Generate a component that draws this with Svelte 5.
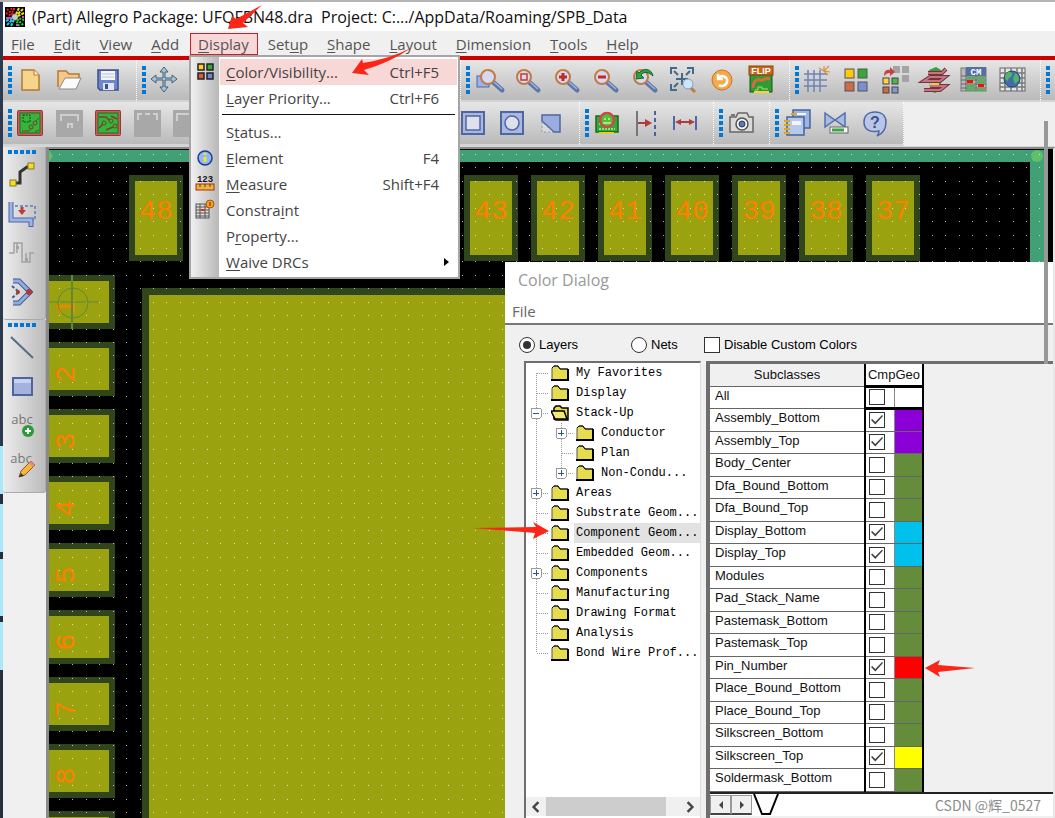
<script>
  const lens = `
    <path d="M17 17 L26 25" stroke="#5f76a8" stroke-width="5" stroke-linecap="round"/>
    <path d="M18 17 L26 24" stroke="#9fb2dc" stroke-width="1.5"/>
    <circle cx="12" cy="12" r="7" fill="#d5daf2" stroke="#c07a45" stroke-width="2"/>
    <path d="M7 10a6 6 0 0 1 5-4" stroke="#f6c894" stroke-width="1" fill="none"/>`;

  const board = `
    <rect x="2" y="2" width="26" height="26" rx="2" fill="#8e3a3a"/>
    <rect x="3" y="3" width="24" height="24" rx="1" fill="#d05a5a"/>
    <rect x="5" y="5" width="20" height="20" fill="#35b53a" stroke="#1c6e22"/>`;

  const icons = {
    create: `<path d="M7 5h12l5 5v15H7z" fill="#f5d48c" stroke="#b27a2e" stroke-width="1.5"/><path d="M19 5v5h5" fill="#fff3cf" stroke="#b27a2e"/>`,
    open: `<path d="M4 22V6h8l3 3h10v5" fill="#f3c889" stroke="#b9782f" stroke-width="1.5"/><path d="M5 24l6-11h16l-5 11z" fill="#fbfbfb" stroke="#8a8a8a"/>`,
    save: `<path d="M5 5h20v20H7l-2-2z" fill="#6f86c8" stroke="#3c508c" stroke-width="1.5"/><rect x="8" y="6" width="14" height="9" fill="#f4f6fc"/><path d="M9 9h12M9 12h12" stroke="#b9c2de"/><rect x="10" y="18" width="11" height="7" fill="#dfe5f5"/><rect x="12" y="19" width="3" height="5" fill="#3c508c"/>`,
    move: `<path d="M15 2l4 5h-3v6h7v-3l5 4-5 4v-3h-7v7h3l-4 5-4-5h3v-7H7v3l-5-4 5-4v3h7V7h-3z" fill="#a9c4d6" stroke="#3f6178"/>`,
    zoomWindow: `<rect x="4" y="11" width="12" height="11" fill="#9db2ea" stroke="#5068a8"/><g transform="translate(3 0)">${lens}</g>`,
    zoomBox: `${lens}<rect x="9" y="9" width="6" height="6" fill="none" stroke="#c23a3a" stroke-width="1.5"/>`,
    zoomIn: `${lens}<path d="M12 8v8M8 12h8" stroke="#c02a2a" stroke-width="3"/>`,
    zoomOut: `${lens}<path d="M8 12h8" stroke="#c02a2a" stroke-width="3"/>`,
    zoomBack: `${lens}<path d="M24 11c-1-7-9-9-14-3L8 6l-1 8 8-1-3-3c3-4 8-3 12 1z" fill="#2f9e46" stroke="#17682a"/>`,
    zoomFit: `<path d="M3 9V3h6M19 3h6v6M3 19v6h6" stroke="#446a88" stroke-width="2" fill="none"/><path d="M6 6l4 4M22 6l-4 4M6 22l4-4" stroke="#446a88" stroke-width="2"/><path d="M14 8v12M8 14h12" stroke="#446a88" stroke-width="2"/><path d="M22 22l5 5" stroke="#b8813e" stroke-width="3"/><circle cx="20" cy="19" r="5" fill="#cfe4f8" stroke="#7ba2cc"/>`,
    undo: `<circle cx="15" cy="15" r="10" fill="#f6a94a" stroke="#cb7424"/><path d="M11 9v5h5M12 13c3-4 9-1 8 4-1 4-6 5-8 3" stroke="#fff" stroke-width="2.5" fill="none"/>`,
    flip: `<rect x="4" y="9" width="22" height="18" fill="#2f9b34" stroke="#17521c"/><path d="M7 23c0-6 3-9 7-8s5-3 10-1" stroke="#d96a3c" stroke-width="3" fill="none"/><path d="M9 25h3v-3h4v2h6" stroke="#a6e07a" fill="none"/><path d="M8 27h15" stroke="#f5d52c" stroke-width="2"/><rect x="3" y="1" width="24" height="9" fill="#c9661a" stroke="#8e430d"/><text x="15" y="9" font-family="Liberation Sans" font-size="9" font-weight="700" fill="#fff" text-anchor="middle">FLIP</text>`,
    grid: `<path d="M2 9h23M2 15h23M2 21h23M6 5v22M12 5v22M18 5v22" stroke="#6d83b5" stroke-width="1.5"/><path d="M22 6l5-5M22 6l6 1M22 6V1M22 6l4 4M22 6l-5-3" stroke="#d9923b" stroke-width="1.2"/>`,
    colors: `<g stroke="#555"><rect x="4" y="4" width="9" height="9" fill="#ffc90e"/><rect x="17" y="4" width="9" height="9" fill="#35a835"/><rect x="4" y="17" width="9" height="9" fill="#cf6b4a"/><rect x="17" y="17" width="9" height="9" fill="#7b8fd4"/></g>`,
    recolor: `<path d="M13 1h7v7h-7zM22 1h7v7h-7zM22 10h7v7h-7z" fill="#a4a4a4"/><g stroke="#444"><rect x="3" y="13" width="6" height="6" fill="#ffd83a"/><rect x="12" y="13" width="6" height="6" fill="#4bb84b"/><rect x="3" y="22" width="6" height="6" fill="#cf6b4a"/><rect x="12" y="22" width="6" height="6" fill="#8494d8"/></g><path d="M4 11c0-5 2-7 6-6V2l5 5-5 4V8c-3 0-4 1-6 3z" fill="#c64242"/>`,
    stack: `<path d="M10 5l7-3 5 3v20l-6 3-5-2z" fill="#36a03a"/><g fill="none" stroke="#7d2f3c" stroke-width="4"><path d="M5 25h16l5-4H11"/><path d="M5 16h16l5-4H11z"/><path d="M9 8h14l4-4"/></g><g fill="none" stroke="#c07880" stroke-width="2"><path d="M5 25h16l5-4H11"/><path d="M5 16h16l5-4H11z"/><path d="M9 8h14l4-4"/></g><path d="M11 19h9" stroke="#eacb50" stroke-width="2"/>`,
    manager: `<rect x="3" y="3" width="25" height="23" fill="#b9b9b9" stroke="#777"/><path d="M3 11h25M3 15h25M3 19h25M3 23h25M8 3v23M18 8v18" stroke="#666"/><path d="M9 12h8v2H9zM19 12h8v2h-8zM9 20h8v2H9zM19 16h8v2h-8zM9 24h8v2H9zM19 24h8v2h-8z" fill="#3fbf45"/><path d="M9 15h6v3H9zM20 19h6v3h-6z" fill="#f01010"/><rect x="8" y="2" width="20" height="9" fill="#54709f"/><text x="18" y="10" font-family="Liberation Mono" font-size="9" font-weight="700" fill="#fff" text-anchor="middle">CM</text>`,
    world: `<rect x="3" y="3" width="25" height="23" fill="#e5e5e5" stroke="#666"/><path d="M3 8h25M3 13h25M3 18h25M3 22h25M8 3v23M14 3v23M20 3v23M25 3v23" stroke="#777" stroke-width="1.5"/><circle cx="15" cy="14" r="8" fill="#3f6fa8" stroke="#274a72"/><path d="M9 9c3-4 7-2 6 1s-4 2-4 6c-3-1-4-4-2-7zM18 8c3 1 4 4 4 7l-4 4-2-5z" fill="#55b368"/>`,
    place: `${board}<path d="M8 7h7v7H8z" fill="none" stroke="#124716" stroke-dasharray="2 1"/><path d="M7 23h7l2-2M21 13l3-3M20 24l4-2" stroke="#77402e" fill="none"/><circle cx="16" cy="19" r="2" fill="none" stroke="#77402e"/><circle cx="20" cy="15" r="2" fill="none" stroke="#77402e"/>`,
    route: `${board}<path d="M6 9h7l3 3M6 20l4-4M13 22l7-3M18 8l6 3" stroke="#77402e" fill="none" stroke-width="1.5"/><circle cx="11" cy="15" r="2" fill="none" stroke="#77402e"/><circle cx="18" cy="13" r="2" fill="none" stroke="#77402e"/><circle cx="22" cy="18" r="2" fill="none" stroke="#77402e"/>`,
    ghostLock: `<rect x="2" y="2" width="27" height="27" fill="#a8a8a8"/><path d="M7 13V7h17v6M14 20v-4h4v4" stroke="#cfcfcf" stroke-width="2" fill="none"/>`,
    ghostFrame: `<rect x="2" y="2" width="27" height="27" fill="#a8a8a8"/><path d="M6 12V6h4M13 6h5M21 6h4v6" stroke="#cfcfcf" stroke-width="2" fill="none"/>`,
    ghostPage: `<rect x="2" y="2" width="27" height="27" fill="#a8a8a8"/><path d="M6 13V6h18" stroke="#cfcfcf" stroke-width="2" fill="none"/>`,
    shapeRect: `<rect x="4" y="4" width="22" height="22" fill="#a9b8e2" stroke="#4f66a0" stroke-width="2"/><rect x="8" y="8" width="14" height="14" fill="#dfe1ea" stroke="#4f66a0" stroke-width="1.5"/>`,
    shapeCircle: `<rect x="4" y="4" width="22" height="22" fill="#a9b8e2" stroke="#4f66a0" stroke-width="2"/><circle cx="15" cy="15" r="7" fill="#dfe1ea" stroke="#4f66a0" stroke-width="1.5"/>`,
    shapeCut: `<path d="M6 7h18v17H18L6 13z" fill="#9aadde" stroke="#4f66a0" stroke-width="1.5"/><path d="M6 14v10h11z" fill="#d9d9d9" stroke="#8595b8" stroke-dasharray="2 2"/>`,
    drc: `<rect x="4" y="8" width="22" height="16" fill="#35a83a" stroke="#176a1c" stroke-width="1.5"/><path d="M7 21h16M7 12h3M20 12h3M7 16h3M20 16h3" stroke="#8ee27a" stroke-width="2" stroke-dasharray="2 1"/><path d="M7 25h15" stroke="#e8c92e" stroke-width="2"/><circle cx="15" cy="12" r="7" fill="#4fbf3f" stroke="#d04848" stroke-width="2.5"/><path d="M12 11h2M16 11h2M11 15h8" stroke="#d6f08a" stroke-width="1.5"/>`,
    spaceRight: `<path d="M6 3v25" stroke="#777" stroke-width="2"/><path d="M24 3v25" stroke="#4c62a0" stroke-width="2" stroke-dasharray="4 3"/><path d="M7 15h8" stroke="#b23a3a" stroke-width="2"/><path d="M14 11l7 4-7 4z" fill="#b23a3a"/>`,
    dimension: `<path d="M4 8v14M26 8v14" stroke="#5168a8" stroke-width="2"/><path d="M9 14h13" stroke="#b23a3a" stroke-width="2"/><path d="M5 14l6-3v6zM25 14l-6-3v6z" fill="#b23a3a"/>`,
    camera: `<path d="M4 9h6l2-4h9l2 4h4v15H4z" fill="#d9d9d9" stroke="#666" stroke-width="1.5"/><rect x="5" y="6" width="4" height="2" fill="#777"/><circle cx="16" cy="16" r="6" fill="#f2f2f2" stroke="#555" stroke-width="1.5"/><circle cx="16" cy="16" r="3" fill="#5f77b0" stroke="#2d3a60"/>`,
    reports: `<rect x="11" y="2" width="17" height="18" fill="#9db5e2" stroke="#4a629c" stroke-width="1.5"/><path d="M14 6h10" stroke="#f4f6fc" stroke-width="2"/><rect x="5" y="9" width="17" height="18" fill="#b5c8ee" stroke="#4a629c" stroke-width="1.5"/><path d="M10 13h9v4h-9z" fill="#f4f6fc"/><path d="M2 13h6M2 17h6M2 21h6M2 25h6M9 6h6" stroke="#d8a820" stroke-width="2"/>`,
    waive: `<path d="M4 5l10 7 10-7v14l-10-7-10 7z" fill="#a9bbe0" stroke="#5470a8" stroke-width="1.5"/><rect x="9" y="19" width="18" height="6" fill="#f2f2f2" stroke="#666"/><path d="M11 22h12" stroke="#3aa83e" stroke-width="3"/>`,
    help: `<path d="M15 4c7 0 11 4 11 10 0 8-4 12-9 14 2-2 2-3 2-5C9 25 4 21 4 14 4 8 8 4 15 4z" fill="#b9c6ea" stroke="#5268a4" stroke-width="1.5"/><text x="15" y="20" font-family="Liberation Sans" font-size="16" font-weight="700" fill="#3e5388" text-anchor="middle">?</text>`,
    connect: `<path d="M8 23h5V12l7-5h3" stroke="#333" stroke-width="3" fill="none"/><g fill="#f2dc2e" stroke="#8a7a1c"><rect x="3" y="20" width="6" height="6"/><rect x="21" y="3" width="6" height="6"/></g>`,
    slide: `<path d="M8 7h20v14H8" fill="none" stroke="#5a7cc0" stroke-width="1.5" stroke-dasharray="3 2"/><path d="M4 3v18h20v7" stroke="#4a66a4" stroke-width="5" fill="none"/><path d="M4 3v18h20v6" stroke="#9db5e6" stroke-width="3" fill="none"/><path d="M15 8v5" stroke="#c03a3a" stroke-width="3"/><path d="M11 11h8l-4 5z" fill="#c03a3a"/>`,
    delay: `<path d="M2 15h5V5h8v19h8V15h4M10 5v10M19 15v9" stroke="#a2a2a2" stroke-width="1.5" fill="none"/><path d="M9 8h3v3H9zM18 20h3v3h-3z" fill="#a2a2a2"/>`,
    corner: `<path d="M6 4h6l11 11-11 11H6" stroke="#3f5a98" stroke-width="5" fill="none"/><path d="M6 4h6l11 11-11 11H6" stroke="#92ace0" stroke-width="3" fill="none"/><path d="M5 9l7 6-7 6" stroke="#3f5a98" stroke-width="2" fill="none" stroke-dasharray="3 2"/><circle cx="11" cy="15" r="2" fill="#a83a3a"/><circle cx="22" cy="15" r="3" fill="#a83a3a"/>`,
    line: `<path d="M4 4l22 21" stroke="#5a6a8a" stroke-width="2"/>`,
    rect: `<rect x="6" y="6" width="19" height="17" fill="#a3b3dd" stroke="#4d649c" stroke-width="2"/><path d="M7 9h17" stroke="#c8d2ee" stroke-width="4"/>`,
    addText: `<text x="15" y="13" font-family="Open Sans" font-size="13" fill="#777" text-anchor="middle">abc</text><circle cx="21" cy="20" r="6" fill="#2b9b38"/><path d="M21 17v6M18 20h6" stroke="#fff" stroke-width="2"/>`,
    editText: `<text x="14" y="13" font-family="Open Sans" font-size="13" fill="#777" text-anchor="middle">abc</text><path d="M12 27l2-6L24 11l4 4-10 10z" fill="#f5b63a" stroke="#8a5a2a"/><path d="M24 11l4 4-2 2-4-4z" fill="#e08a7a"/><path d="M12 27l2-4 3 3z" fill="#333"/>`,
    palette: `<g stroke="#222" stroke-width="1.5"><rect x="8" y="7" width="6" height="6" fill="#ffd020"/><rect x="17" y="7" width="6" height="6" fill="#35a835"/><rect x="8" y="16" width="6" height="6" fill="#d85a40"/><rect x="17" y="16" width="6" height="6" fill="#6f86d8"/></g>`,
    info: `<circle cx="15" cy="15" r="7" fill="#8fb8ee" stroke="#1e3a9c" stroke-width="1.5"/><path d="M15 14v5M15 10v2" stroke="#f5e02a" stroke-width="3"/>`,
    measure: `<text x="15" y="13" font-family="Liberation Mono" font-size="9" font-weight="700" fill="#111" text-anchor="middle">123</text><rect x="6" y="15" width="18" height="6" fill="#e8b63a" stroke="#b02a1a"/><path d="M10 15v3M15 15v3M20 15v3" stroke="#7a2a10"/>`,
    constraint: `<rect x="6" y="9" width="13" height="14" fill="#ddd" stroke="#555"/><path d="M6 12h13M6 15h13M6 18h13M6 21h13M10 9v14M15 9v14" stroke="#555"/><path d="M11 15h4" stroke="#e03020" stroke-width="2"/><circle cx="20" cy="9" r="4" fill="#f0a020" stroke="#a85a10"/><path d="M20 7v4" stroke="#a01010"/>`
  };

  const topRow = [
    { name: 'file', tools: ['create', 'open', 'save'] },
    { name: 'edit', tools: ['move'] },
    { name: 'zoom', tools: ['zoomWindow', 'zoomBox', 'zoomIn', 'zoomOut', 'zoomBack', 'zoomFit', 'undo', 'flip'] },
    { name: 'setup', tools: ['grid', 'colors', 'recolor', 'stack', 'manager', 'world'] },
    { name: 'more', tools: [] }
  ];

  const secondRow = [
    { name: 'mode', tools: ['place', 'ghostLock', 'route', 'ghostFrame', 'ghostPage'], after: ['shapeRect', 'shapeCircle', 'shapeCut'] },
    { name: 'dimension', tools: ['drc', 'spaceRight', 'dimension'] },
    { name: 'capture', tools: ['camera'] },
    { name: 'misc', tools: ['reports', 'waive', 'help'] }
  ];

  const sideGroups = [
    ['connect', 'slide', 'delay', 'corner'],
    ['line', 'rect', 'addText', 'editText']
  ];

  // "&" stands in front of the accelerator letter
  const menus = ['&File', '&Edit', '&View', '&Add', '&Display', 'Set&up', '&Shape', '&Layout', '&Dimension', '&Tools', '&Help'];

  const displayMenu = [
    { label: '&Color/Visibility...', keys: 'Ctrl+F5', icon: 'palette', active: true },
    { label: '&Layer Priority...', keys: 'Ctrl+F6' },
    { separator: true },
    { label: 'S&tatus...' },
    { label: '&Element', keys: 'F4', icon: 'info' },
    { label: '&Measure', keys: 'Shift+F4', icon: 'measure' },
    { label: 'Constra&int', icon: 'constraint' },
    { label: 'P&roperty...' },
    { label: '&Waive DRCs', submenu: true }
  ];

  const tree = [
    { label: 'My Favorites', first: true },
    { label: 'Display' },
    { label: 'Stack-Up', box: 'minus', open: true },
    { label: 'Conductor', box: 'plus', child: true },
    { label: 'Plan', child: true },
    { label: 'Non-Condu...', box: 'plus', child: true, last: true },
    { label: 'Areas', box: 'plus' },
    { label: 'Substrate Geom...' },
    { label: 'Component Geom...', selected: true },
    { label: 'Embedded Geom...' },
    { label: 'Components', box: 'plus' },
    { label: 'Manufacturing' },
    { label: 'Drawing Format' },
    { label: 'Analysis' },
    { label: 'Bond Wire Prof...', last: true }
  ];

  let subclasses = $state([
    { name: 'All', on: false, color: '#ffffff' },
    { name: 'Assembly_Bottom', on: true, color: '#8c00d8' },
    { name: 'Assembly_Top', on: true, color: '#8c00d8' },
    { name: 'Body_Center', on: false, color: '#648c3a' },
    { name: 'Dfa_Bound_Bottom', on: false, color: '#648c3a' },
    { name: 'Dfa_Bound_Top', on: false, color: '#648c3a' },
    { name: 'Display_Bottom', on: true, color: '#00c0ec' },
    { name: 'Display_Top', on: true, color: '#00c0ec' },
    { name: 'Modules', on: false, color: '#648c3a' },
    { name: 'Pad_Stack_Name', on: false, color: '#648c3a' },
    { name: 'Pastemask_Bottom', on: false, color: '#648c3a' },
    { name: 'Pastemask_Top', on: false, color: '#648c3a' },
    { name: 'Pin_Number', on: true, color: '#ff0000' },
    { name: 'Place_Bound_Bottom', on: false, color: '#648c3a' },
    { name: 'Place_Bound_Top', on: false, color: '#648c3a' },
    { name: 'Silkscreen_Bottom', on: false, color: '#648c3a' },
    { name: 'Silkscreen_Top', on: true, color: '#ffff00' },
    { name: 'Soldermask_Bottom', on: false, color: '#648c3a' }
  ]);

  let view = $state('layers');
  let noCustom = $state(false);

  const topPads = [48, 43, 42, 41, 40, 39, 38, 37].map((n) => ({ n, x: 80 + (48 - n) * 67 }));
  const sidePads = [1, 2, 3, 4, 5, 6, 7, 8, ''].map((n, i) => ({ n, y: 126 + i * 67 }));

  const pitch = 13.43;
  let dots = '';
  for (let row = 0; row < 80; row++) {
    for (let col = 0; col < 150; col++) {
      dots += `M${Math.round(10 + col * pitch)} ${Math.round(5 + row * pitch)}h1v1h-1z`;
    }
  }

  function split(label) {
    const i = label.indexOf('&');
    return [label.slice(0, i), label[i + 1], label.slice(i + 2)];
  }
</script>

{#snippet icon(name)}
  <svg class="icon" viewBox="0 0 30 30" fill="none" aria-hidden="true">{@html icons[name]}</svg>
{/snippet}

{#snippet accel(label)}
  {@const [pre, key, post] = split(label)}
  <span>{pre}<u>{key}</u>{post}</span>
{/snippet}

{#snippet grip()}
  <span class="grip"><i></i><i></i><i></i><i></i><i></i></span>
{/snippet}

{#snippet toolRow(groups)}
  {#each groups as group}
    <div class="group {group.name}">
      {@render grip()}
      {#each group.tools as tool}
        <button class="tool" aria-label={tool}>{@render icon(tool)}</button>
      {/each}
      {#if group.after}
        <span class="spacer"></span>
        {#each group.after as tool}
          <button class="tool" aria-label={tool}>{@render icon(tool)}</button>
        {/each}
      {/if}
    </div>
  {/each}
{/snippet}

<div class="app">
  <header class="titlebar">
    <svg class="logo" viewBox="0 0 20 20" aria-hidden="true">
      <rect width="20" height="20" fill="#000" />
      <path d="M2 2l6 6M6 1l3 6M1 6l6 3M9 1v3" stroke="#f02020" stroke-width="2" stroke-dasharray="2 1" />
      <path d="M18 2l-6 6M14 1l-3 6M19 6l-6 3" stroke="#f0e020" stroke-width="2" stroke-dasharray="3 1" />
      <path d="M2 18l6-6M6 19l3-6M1 14l6-3" stroke="#20d8e8" stroke-width="2" stroke-dasharray="3 1" />
      <path d="M18 18l-6-6M14 19l-3-6M19 13l-6-2" stroke="#30d030" stroke-width="2" stroke-dasharray="2 1" />
      <path d="M1 11h5M11 18h2M17 10h2" stroke="#e040e0" stroke-width="2" />
      <circle cx="10" cy="10" r="3" fill="#c8c8c8" />
    </svg>
    <h1>(Part) Allegro Package: UFQFBN48.dra  Project: C:.../AppData/Roaming/SPB_Data</h1>
  </header>

  <nav class="menubar">
    {#each menus as menu}
      {#if menu === '&Display'}
        <div class="menu-holder">
          <button class="menu current" aria-expanded="true">{@render accel(menu)}</button>
          <div class="dropdown">
            {#each displayMenu as item}
              {#if item.separator}
                <hr />
              {:else}
                <button class="item" class:active={item.active}>
                  <span class="item-icon">{#if item.icon}{@render icon(item.icon)}{/if}</span>
                  <span class="item-text">
                    {@render accel(item.label)}
                    {#if item.keys}<span>{item.keys}</span>{/if}
                    {#if item.submenu}<span class="caret"></span>{/if}
                  </span>
                </button>
              {/if}
            {/each}
          </div>
        </div>
      {:else}
        <button class="menu">{@render accel(menu)}</button>
      {/if}
    {/each}
  </nav>

  <div class="toolbar first">{@render toolRow(topRow)}</div>
  <div class="toolbar second">{@render toolRow(secondRow)}</div>

  <main>
    <aside>
      {#each sideGroups as tools}
        <div class="side-group">
          {@render grip()}
          {#each tools as tool}
            <button class="tool" aria-label={tool}>{@render icon(tool)}</button>
          {/each}
        </div>
      {/each}
    </aside>

    <section class="canvas">
      <svg class="board" aria-label="Package drawing">
        <rect width="100%" height="12" y="1" fill="#41a076" />
        <rect x="981" y="1" width="14" height="100%" fill="#41a076" />
        <rect x="995" y="1" width="100%" height="100%" fill="#000" />
        <circle cx="988" cy="7" r="6" fill="#5fbf6a" />
        <path d="M0 1l4 6-4 6z" fill="#5fbf6a" />
        {#each topPads as pad}
          <rect class="mask" x={pad.x} y="26" width="54" height="86" />
          <rect class="pad" x={pad.x + 6} y="32" width="42" height="74" />
        {/each}
        {#each sidePads as pad}
          <rect class="mask" x="-10" y={pad.y} width="76" height="54" />
          <rect class="pad" x="-10" y={pad.y + 6} width="70" height="42" />
        {/each}
        <rect class="mask" x="93" y="139" width="800" height="900" />
        <rect class="pad" x="100" y="146" width="786" height="886" />
        <path class="dots" d={dots} />
        {#each topPads as pad}
          <text class="pin" x={pad.x + 27} y="70">{pad.n}</text>
        {/each}
        {#each sidePads as pad}
          {#if pad.n}
            <text class="pin" transform="translate(25 {pad.y + 32}) rotate(-90)">{pad.n}</text>
          {/if}
        {/each}
        <g fill="none" stroke="#5f8c32">
          <circle cx="24" cy="154" r="15" />
          <path d="M0 153h50" />
          <path d="M23 126v54" stroke-width="2" />
        </g>
      </svg>

      <div class="dialog" role="dialog" aria-labelledby="dialog-title">
        <h2 id="dialog-title">Color Dialog</h2>
        <div class="dialog-menu"><button>File</button></div>

        <div class="options">
          <label class="layers"><input type="radio" bind:group={view} value="layers" />Layers</label>
          <label class="nets"><input type="radio" bind:group={view} value="nets" />Nets</label>
          <label><input type="checkbox" bind:checked={noCustom} />Disable Custom Colors</label>
        </div>

        <div class="panes">
          <div class="tree">
            <ul>
              {#each tree as node}
                <li class:selected={node.selected}>
                  {#if node.child}
                    <svg class="guide" viewBox="0 0 25 20"><path d="M10 0v20" /></svg>
                  {/if}
                  <svg class="guide" viewBox="0 0 25 20">
                    <path d="M10 {node.first ? 10 : 0}V{node.last ? 10 : 20}M11 10h12" />
                    {#if node.box}
                      <rect x="5" y="5" width="10" height="10" rx="1" />
                      <path class="sign" d={node.box === 'plus' ? 'M7 10h6M10 7v6' : 'M7 10h6'} />
                    {/if}
                  </svg>
                  <svg class="folder" viewBox="0 0 18 16">
                    {#if node.open}
                      <path d="M3 14V3l2-2h4l2 2h6v12H5z" fill="#e3d94a" stroke="#000" stroke-width="1.5" />
                      <path d="M0 6h13l3 8H4z" fill="#f0ea78" stroke="#000" stroke-width="1.5" />
                    {:else}
                      <path d="M1 15V3l2-2h4l2 3h8v11z" fill="#e6dd4e" stroke="#555" />
                      <path d="M0 15h17V4" fill="none" stroke="#000" stroke-width="2" />
                      <path d="M1 3l2-2h4l2 3h8" fill="none" stroke="#000" />
                    {/if}
                  </svg>
                  <button>{node.label}</button>
                </li>
              {/each}
            </ul>
            <div class="scroll">
              <button aria-label="Scroll left"><svg viewBox="0 0 10 10"><path d="M7 1L3 5l4 4" /></svg></button>
              <span class="thumb"></span>
              <button aria-label="Scroll right"><svg viewBox="0 0 10 10"><path d="M3 1l4 4-4 4" /></svg></button>
            </div>
          </div>

          <div class="sheet">
            <div class="sheet-body">
              <table>
                <thead>
                  <tr><th class="name">Subclasses</th><th class="geo" colspan="2">CmpGeo</th></tr>
                </thead>
                <tbody>
                  {#each subclasses as row}
                    <tr>
                      <td class="name">{row.name}</td>
                      <td class="tick"><input type="checkbox" aria-label={row.name} bind:checked={row.on} /></td>
                      <td class="swatch" style="background: {row.color}"></td>
                    </tr>
                  {/each}
                </tbody>
              </table>
            </div>
            <div class="tabs">
              <button aria-label="Previous sheet"><svg viewBox="0 0 10 10"><path d="M7 1v8L3 5z" /></svg></button>
              <button aria-label="Next sheet"><svg viewBox="0 0 10 10"><path d="M3 1v8l4-4z" /></svg></button>
              <svg class="tab-edge" viewBox="0 0 28 22"><path d="M2 0l8 20h8L26 0" /></svg>
              <span class="credit">CSDN @辉_0527</span>
            </div>
          </div>
        </div>
      </div>
    </section>
  </main>

  <svg class="marks" aria-hidden="true">
    <rect x="1044" y="121" width="4" height="243" fill="#989898" />
    <g fill="#fb2618">
      <path d="M228 29l4-13 4 3 26-14-19 18 5 4z" />
      <path d="M352 73l10-14 1 4q26-4 48-15-20 14-47 22l5 5z" />
      <path d="M549 531l-16-9 3 5-63 1 62 5-2 6z" />
      <path d="M925 668l15-8-2 5 37 3-37 4 2 5z" />
    </g>
  </svg>
</div>

<style>
  :global(body) {
    margin: 0;
  }

  .app {
    position: relative;
    box-sizing: border-box;
    min-height: 100vh;
    display: flex;
    flex-direction: column;
    padding-left: 3px;
    border-top: 2px solid #b4b4b4;
    background: linear-gradient(#2b3a4d 0 444px, #a8e8f8 444px 492px, #26303c 492px 502px, #a8e8f8 502px 550px, #26303c 550px 557px, #a8e8f8 557px 614px, #26303c 614px 620px, #a8e8f8 620px 668px, #26303c 668px);
    font-family: "Open Sans", "Noto Sans", sans-serif;
    font-size: 15px;
    color: #444;
    overflow: hidden;
  }

  button {
    padding: 0;
    border: 0;
    background: none;
    font: inherit;
    color: inherit;
  }

  .icon {
    display: block;
    width: 30px;
    height: 30px;
    overflow: visible;
  }

  .titlebar {
    display: flex;
    align-items: center;
    gap: 7px;
    height: 29px;
    padding-left: 2px;
    background: #fff;
  }

  .logo {
    width: 20px;
    height: 20px;
  }

  h1 {
    margin: 0;
    font-size: 16px;
    font-weight: 400;
    line-height: 24px;
    color: #111;
    white-space: pre;
  }

  .menubar {
    display: flex;
    gap: 2px;
    height: 23px;
    padding: 2px 0 0;
    background: #f0f0f0;
    border-bottom: 4px solid #cc0000;
  }

  .menu {
    box-sizing: border-box;
    height: 22px;
    padding: 0 8px 0 7px;
    border: 1px solid transparent;
    line-height: 18px;
    color: #555;
  }

  .menu.current {
    background: #f8d7d7;
    border-color: #c8202c;
  }

  u {
    text-underline-offset: 2px;
  }

  .menu-holder {
    position: relative;
  }

  .dropdown {
    position: absolute;
    z-index: 2;
    top: 22px;
    left: -1px;
    box-sizing: border-box;
    width: 271px;
    padding: 2px 1px;
    border: 2px solid #a5a5a5;
    background: linear-gradient(90deg, #f0f0f0, #b8b8b8 28px, #fff 28px);
  }

  hr {
    height: 1px;
    margin: 3px 2px 4px 30px;
    border: 0;
    background: #111;
  }

  .item {
    display: flex;
    width: 100%;
    height: 26px;
    text-align: left;
    line-height: 26px;
  }

  .item-icon {
    flex: 0 0 28px;
    height: 26px;
    overflow: hidden;
  }

  .item-icon .icon {
    margin: -2px 0 0 -2px;
  }

  .item-text {
    flex: 1;
    display: flex;
    justify-content: space-between;
    align-items: center;
    padding: 0 18px 0 6px;
  }

  .active .item-text {
    background: #f8d7d7;
  }

  .caret {
    margin-right: -10px;
    border: 4px solid transparent;
    border-left: 5px solid #000;
    border-right: 0;
  }

  .toolbar {
    display: flex;
    background: #efefef;
  }

  .first {
    height: 42px;
  }

  .second {
    height: 44px;
    border-bottom: 1px solid #d8d8d8;
  }

  .group {
    display: flex;
    align-items: center;
    gap: 4px;
    box-sizing: border-box;
    padding: 0 11px 0 5px;
    border-right: 1px dotted #fff;
    border-bottom: 2px solid #d4d4d4;
    background: linear-gradient(#e6e6e6, #bababa);
  }

  .group .grip {
    margin-right: -4px;
  }

  .edit {
    flex: 0 0 324px;
  }

  .more {
    flex: 1;
  }

  .mode {
    flex: 0 0 577px;
  }

  .spacer {
    flex: 1;
  }

  .grip {
    display: grid;
    gap: 2px;
  }

  .grip i {
    width: 4px;
    height: 4px;
    background: #0078d7;
  }

  .tool {
    display: grid;
    place-items: center;
    flex: 0 0 35px;
    height: 35px;
  }

  main {
    flex: 1;
    display: flex;
    background: #f0f0f0;
  }

  aside {
    flex: 0 0 43px;
  }

  .side-group {
    display: flex;
    flex-direction: column;
    align-items: center;
    gap: 4px;
    box-sizing: border-box;
    padding: 3px 4px 10px 0;
    border-bottom: 1px solid #aaa;
    border-right: 1px solid #aaa;
    border-radius: 0 0 3px 3px;
    background: linear-gradient(90deg, #ececec, #bcbcbc);
  }

  .side-group .grip {
    grid-auto-flow: column;
    margin-bottom: -1px;
  }

  .canvas {
    position: relative;
    flex: 1;
    border: solid #8a8a8a;
    border-width: 2px 0 0 3px;
    border-right: 2px solid #e8e8e8;
    background: #000;
  }

  .board {
    position: absolute;
    width: 100%;
    height: 100%;
  }

  .mask {
    fill: #30451c;
  }

  .pad {
    fill: #9aa210;
  }

  .dots {
    fill: #fff;
    fill-opacity: 0.7;
  }

  .pin {
    font-family: "Liberation Mono", monospace;
    font-size: 28px;
    fill: #ff8000;
    text-anchor: middle;
  }

  .dialog {
    position: relative;
    display: flex;
    flex-direction: column;
    box-sizing: border-box;
    min-height: calc(100% - 113px);
    margin: 113px 0 0 456px;
    background: #f0f0f0;
  }

  h2 {
    margin: 0;
    padding: 0 13px;
    font-size: 16px;
    font-weight: 400;
    line-height: 37px;
    color: #999;
    background: #fff;
  }

  .dialog-menu {
    padding-left: 7px;
    background: #fff;
    border-bottom: 2px solid #777;
    line-height: 24px;
    color: #666;
  }

  .options {
    display: flex;
    align-items: center;
    box-sizing: border-box;
    height: 36px;
    padding: 3px 14px 0;
    font-family: "Liberation Sans", Arial, sans-serif;
    font-size: 13px;
    color: #000;
  }

  .options label {
    display: flex;
    align-items: center;
    gap: 4px;
  }

  .layers {
    flex: 0 0 112px;
  }

  .nets {
    flex: 0 0 73px;
  }

  input {
    appearance: none;
    flex: none;
    box-sizing: border-box;
    display: grid;
    place-items: center;
    width: 16px;
    height: 16px;
    margin: 0;
    border: 1px solid #333;
    background: #fff;
  }

  input[type="radio"] {
    border-radius: 50%;
  }

  input[type="radio"]:checked::before {
    content: "";
    width: 8px;
    height: 8px;
    border-radius: 50%;
    background: #333;
  }

  input[type="checkbox"]:checked::before {
    content: "";
    width: 12px;
    height: 10px;
    background: #444;
    clip-path: polygon(0 50%, 10% 40%, 36% 70%, 92% 0, 100% 10%, 36% 95%);
  }

  .panes {
    flex: 1;
    display: flex;
    gap: 5px;
    padding-left: 19px;
  }

  .tree {
    flex: 0 0 174px;
    display: flex;
    flex-direction: column;
    border: solid #6e6e6e;
    border-width: 2px 0 0 2px;
    border-right: 1px solid #ddd;
    background: #fff;
    overflow: hidden;
  }

  ul {
    flex: 1;
    margin: 0;
    padding: 0;
    list-style: none;
  }

  li {
    display: flex;
    align-items: center;
    height: 20px;
    font-family: "Liberation Mono", monospace;
    font-size: 12px;
    color: #000;
  }

  li button {
    flex: 1;
    margin-left: 5px;
    padding-left: 2px;
    line-height: 20px;
    text-align: left;
    white-space: nowrap;
  }

  .selected button {
    background: #e2e2e2;
  }

  .guide {
    flex: 0 0 25px;
    height: 20px;
    fill: #fff;
    stroke: #999;
    stroke-dasharray: 1 1;
    shape-rendering: crispEdges;
  }

  .guide rect {
    stroke-dasharray: none;
  }

  .guide .sign {
    stroke: #2a4f9c;
    stroke-dasharray: none;
  }

  .folder {
    flex: 0 0 18px;
    height: 16px;
  }

  .scroll {
    display: flex;
    height: 19px;
    margin-bottom: 2px;
    background: #f0f0f0;
  }

  .scroll button {
    flex: 0 0 20px;
    display: grid;
    place-items: center;
  }

  .scroll svg {
    width: 12px;
    height: 12px;
    fill: none;
    stroke: #444;
    stroke-width: 2;
  }

  .thumb {
    flex: 0 0 120px;
    margin-right: auto;
    background: #cdcdcd;
  }

  .sheet {
    flex: 1;
    display: flex;
    flex-direction: column;
    border: solid #6e6e6e;
    border-width: 3px 0 0 4px;
  }

  .sheet-body {
    flex: 1;
    border-bottom: 2px solid #222;
  }

  table {
    table-layout: fixed;
    width: 214px;
    border-collapse: collapse;
    font-family: "Liberation Sans", Arial, sans-serif;
    font-size: 13px;
    color: #111;
  }

  tr {
    height: 22px;
  }

  tbody tr:nth-child(even) {
    height: 23px;
  }

  th, td {
    box-sizing: border-box;
    padding: 0;
    border-bottom: 1px solid #666;
    line-height: 15px;
  }

  th {
    height: 22px;
    font-weight: 400;
  }

  .name {
    width: 155px;
    border-right: 2px solid #000;
    background: #fff;
  }

  th.name {
    background: #f0f0f0;
  }

  td.name {
    padding: 0 0 4px 5px;
  }

  .geo {
    border-right: 2px solid #000;
    background: #fff;
  }

  .tick {
    padding-left: 3px;
    border-right: 1px solid #888;
    background: #fff;
  }

  .swatch {
    border-right: 2px solid #000;
  }

  tbody tr:first-child .tick,
  tbody tr:first-child .swatch {
    border-top: 3px solid #000;
    border-bottom: 3px solid #000;
  }

  .tabs {
    display: flex;
    align-items: center;
    height: 22px;
    margin-bottom: 2px;
    background: #fff;
  }

  .tabs button {
    box-sizing: border-box;
    display: grid;
    place-items: center;
    width: 21px;
    height: 20px;
    border: 1px solid #999;
    border-bottom: 2px solid #444;
    background: #f0f0f0;
  }

  .tabs button svg {
    width: 10px;
    height: 10px;
    fill: #444;
  }

  .tab-edge {
    width: 28px;
    height: 22px;
    fill: none;
    stroke: #000;
    stroke-width: 2;
  }

  .credit {
    margin: 0 12px 0 auto;
    font-family: "Noto Sans CJK SC", sans-serif;
    font-size: 14px;
    line-height: 20px;
    color: #8c8c8c;
  }

  .marks {
    position: absolute;
    z-index: 3;
    top: -2px;
    left: 0;
    width: 100%;
    height: 100%;
    pointer-events: none;
  }
</style>
